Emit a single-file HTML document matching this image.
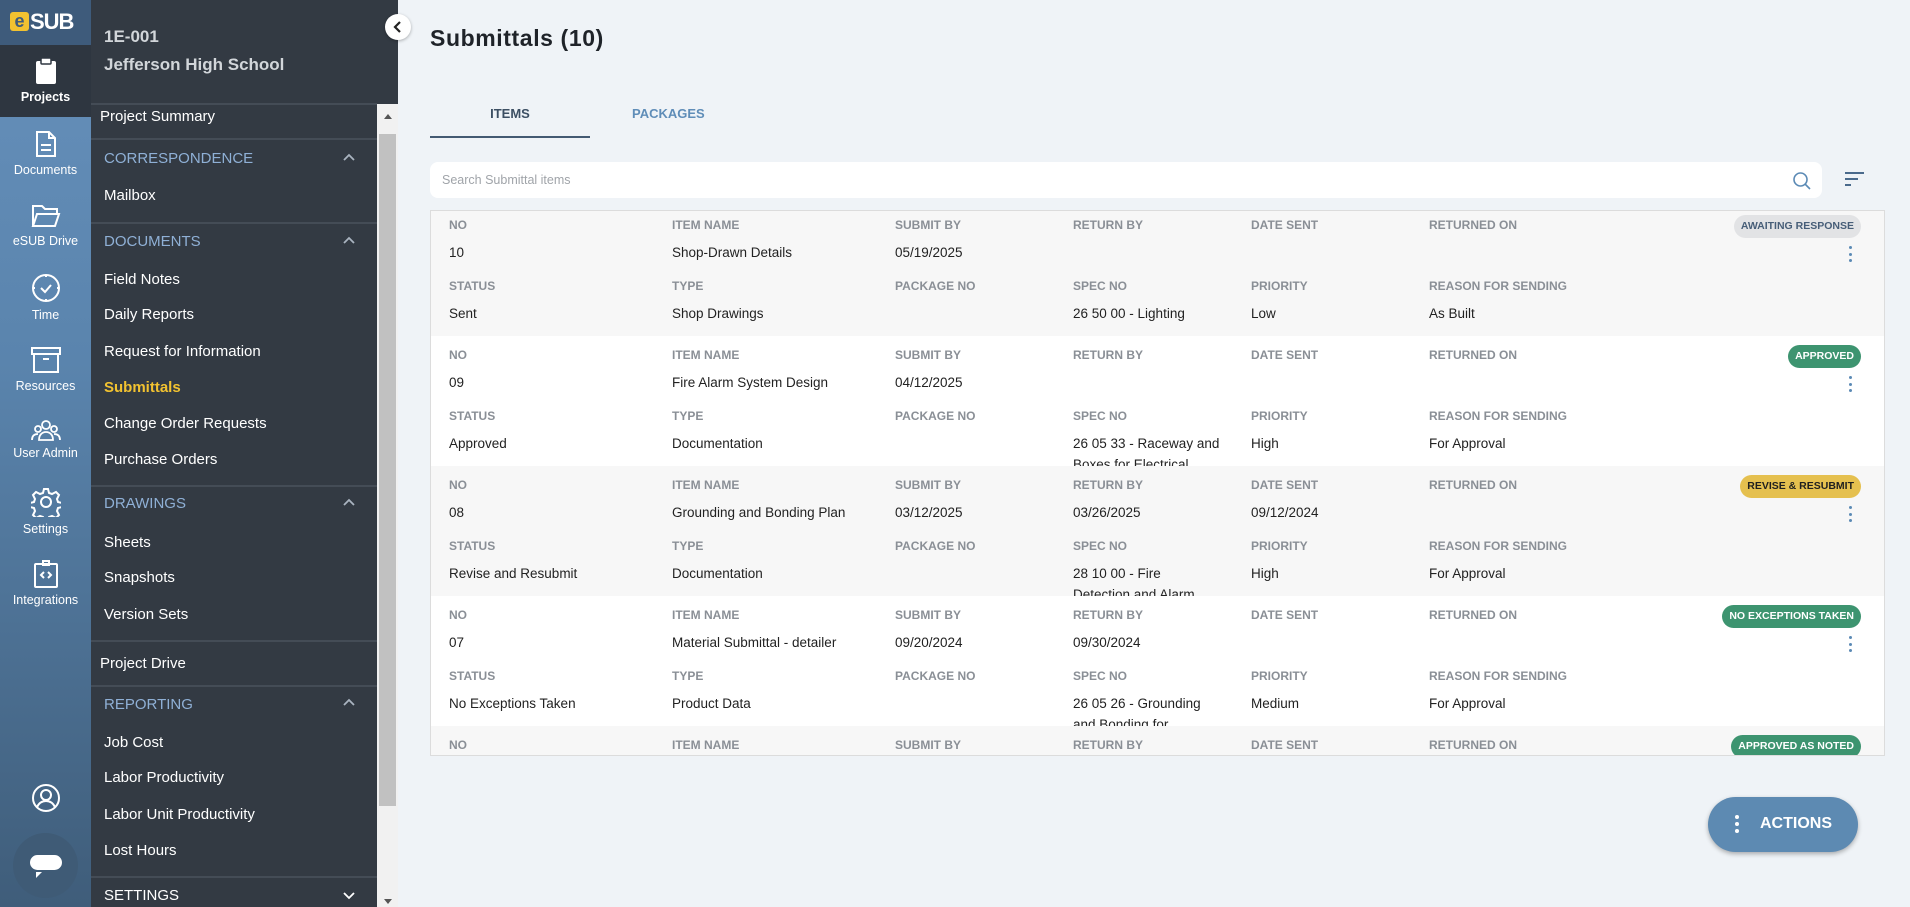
<!DOCTYPE html>
<html><head><meta charset="utf-8"><style>
*{box-sizing:border-box;margin:0;padding:0}
body{width:1910px;height:907px;overflow:hidden;background:#eff3f7;font-family:"Liberation Sans",sans-serif;position:relative}
.rail{position:absolute;left:0;top:0;width:91px;height:907px;background:linear-gradient(#6690bb 0%,#5a84ad 40%,#3f5d7a 100%)}
.logo{position:absolute;left:0;top:0;width:91px;height:45px;background:#3e5b7b}
.proj{position:absolute;left:0;top:45px;width:91px;height:72px;background:#2e3640}
.ri{position:absolute;left:0;width:91px;text-align:center;color:#fff;font-size:12.5px}
.ri svg{display:block;margin:0 auto 5px}
.nav{position:absolute;left:91px;top:0;width:307px;height:907px;background:#333a43;color:#fff}
.nav .t{position:absolute;font-size:15px;white-space:nowrap}
.nav .s{color:#8fb0d6}
.nav .d{position:absolute;left:0;width:286px;height:2px;background:#444c56}
.chev{position:absolute;left:252px;width:12px;height:12px}
.sb{position:absolute;left:377px;top:104px;width:21px;height:803px;background:#f1f1f1}
.main{position:absolute;left:398px;top:0;right:0;bottom:0}
.lbl{position:absolute;font-size:12px;font-weight:bold;color:#8a8f96;white-space:nowrap}
.val{position:absolute;font-size:13.5px;color:#222;line-height:21px}
.row{position:absolute;left:0;width:1453px;height:130px;overflow:hidden}
.badge{position:absolute;right:23px;top:9px;height:23px;border-radius:12px;font-size:10.5px;font-weight:bold;line-height:23px;padding:0 7px;color:#fff}
.dots{position:absolute;left:1418px;top:40px;width:4px}
.dots i{display:block;width:3px;height:3px;border-radius:50%;background:#5b8ab5;margin-bottom:3.5px}
</style></head><body>
<div class="rail">
 <div class="logo"><div style="position:absolute;left:10px;top:12px;width:19px;height:19px;background:#f2c230;border-radius:3px;color:#3e5b7b;font-weight:bold;font-size:18px;line-height:18px;text-align:center">e</div><div style="position:absolute;left:30px;top:9px;color:#fff;font-weight:bold;font-size:22px;letter-spacing:-1px">SUB</div></div>
 <div class="proj"></div>
 <div class="ri" style="top:57px;font-weight:bold"><svg width="22" height="28" viewBox="0 0 22 28"><rect x="1" y="4" width="20" height="23" rx="2" fill="#fff"/><rect x="6" y="1" width="10" height="6" rx="1" fill="#fff" stroke="#2e3640" stroke-width="1.5"/></svg>Projects</div>
 <div class="ri" style="top:130px"><svg width="22" height="28" viewBox="0 0 22 28" fill="none" stroke="#fff" stroke-width="2"><path d="M2 2h12l6 6v18H2z"/><path d="M14 2v6h6M6 15h10M6 20h10"/></svg>Documents</div>
 <div class="ri" style="top:203px"><svg width="30" height="26" viewBox="0 0 30 26" fill="none" stroke="#fff" stroke-width="2"><path d="M2 23V3h9l3 3h12v5M2 23l4-12h22l-4 12z"/></svg>eSUB Drive</div>
 <div class="ri" style="top:273px"><svg width="30" height="30" viewBox="0 0 30 30" fill="none" stroke="#fff" stroke-width="2"><circle cx="15" cy="15" r="13"/><path d="M10 15l4 4 6-7M15 2v2M15 26v2M2 15h2M26 15h2"/></svg>Time</div>
 <div class="ri" style="top:346px"><svg width="30" height="28" viewBox="0 0 30 28" fill="none" stroke="#fff" stroke-width="2"><rect x="1" y="2" width="28" height="6"/><path d="M3 8v18h24V8M12 13h6"/></svg>Resources</div>
 <div class="ri" style="top:419px"><svg width="30" height="22" viewBox="0 0 30 22" fill="none" stroke="#fff" stroke-width="1.8"><circle cx="15" cy="6" r="4"/><circle cx="7" cy="10" r="3"/><circle cx="23" cy="10" r="3"/><path d="M8 21c0-5 3-8 7-8s7 3 7 8zM1 21c0-4 2-6 6-6M29 21c0-4-2-6-6-6"/></svg>User Admin</div>
 <div class="ri" style="top:487px"><svg width="30" height="30" viewBox="0 0 30 30" fill="none" stroke="#fff" stroke-width="2"><circle cx="15" cy="15" r="5"/><path d="M13 2h4l1 4 3 1 4-2 3 3-2 4 1 3 4 1v4l-4 1-1 3 2 4-3 3-4-2-3 1-1 4h-4l-1-4-3-1-4 2-3-3 2-4-1-3-4-1v-4l4-1 1-3-2-4 3-3 4 2 3-1z"/></svg>Settings</div>
 <div class="ri" style="top:560px"><svg width="24" height="28" viewBox="0 0 24 28" fill="none" stroke="#fff" stroke-width="2"><rect x="1" y="4" width="22" height="23" rx="1"/><path d="M9 1h6v4H9zM10 12l-3 3 3 3M14 12l3 3-3 3"/></svg>Integrations</div>
 <div class="ri" style="top:783px"><svg width="30" height="30" viewBox="0 0 30 30" fill="none" stroke="#fff" stroke-width="2"><circle cx="15" cy="15" r="13"/><circle cx="15" cy="12" r="5"/><path d="M6 24c2-4 5-6 9-6s7 2 9 6"/></svg></div>
 <div style="position:absolute;left:13px;top:833px;width:65px;height:65px;border-radius:50%;background:#3f5b76"></div>
 <div style="position:absolute;left:30px;top:855px;width:32px;height:15px;border-radius:8px;background:#fff"></div>
 <div style="position:absolute;left:36px;top:872px;width:0;height:0;border-top:6px solid #fff;border-right:6px solid transparent"></div>
</div>
<div class="nav">
 <div class="t" style="left:13px;top:27px;font-size:17px;font-weight:bold;color:#d2d6da">1E-001</div>
 <div class="t" style="left:13px;top:55px;font-size:17px;font-weight:bold;color:#d2d6da">Jefferson High School</div>
 <div class="d" style="top:103px"></div>
 <div class="t" style="left:9px;top:108px">Project Summary</div>
 <div class="d" style="top:138px"></div>
 <div class="t s" style="left:13px;top:150px">CORRESPONDENCE</div>
 <div class="t" style="left:13px;top:187px">Mailbox</div>
 <div class="d" style="top:222px"></div>
 <div class="t s" style="left:13px;top:233px">DOCUMENTS</div>
 <div class="t" style="left:13px;top:271px">Field Notes</div>
 <div class="t" style="left:13px;top:306px">Daily Reports</div>
 <div class="t" style="left:13px;top:343px">Request for Information</div>
 <div class="t" style="left:13px;top:379px;color:#f2c230;font-weight:bold">Submittals</div>
 <div class="t" style="left:13px;top:415px">Change Order Requests</div>
 <div class="t" style="left:13px;top:451px">Purchase Orders</div>
 <div class="d" style="top:485px"></div>
 <div class="t s" style="left:13px;top:495px">DRAWINGS</div>
 <div class="t" style="left:13px;top:534px">Sheets</div>
 <div class="t" style="left:13px;top:569px">Snapshots</div>
 <div class="t" style="left:13px;top:606px">Version Sets</div>
 <div class="d" style="top:640px"></div>
 <div class="t" style="left:9px;top:655px">Project Drive</div>
 <div class="d" style="top:685px"></div>
 <div class="t s" style="left:13px;top:696px">REPORTING</div>
 <div class="t" style="left:13px;top:734px">Job Cost</div>
 <div class="t" style="left:13px;top:769px">Labor Productivity</div>
 <div class="t" style="left:13px;top:806px">Labor Unit Productivity</div>
 <div class="t" style="left:13px;top:842px">Lost Hours</div>
 <div class="d" style="top:876px"></div>
 <div class="t" style="left:13px;top:887px">SETTINGS</div>
 <svg class="chev" style="top:152px" viewBox="0 0 12 12"><path d="M1 8l5-5 5 5" fill="none" stroke="#aab4c0" stroke-width="1.8"/></svg>
 <svg class="chev" style="top:235px" viewBox="0 0 12 12"><path d="M1 8l5-5 5 5" fill="none" stroke="#aab4c0" stroke-width="1.8"/></svg>
 <svg class="chev" style="top:497px" viewBox="0 0 12 12"><path d="M1 8l5-5 5 5" fill="none" stroke="#aab4c0" stroke-width="1.8"/></svg>
 <svg class="chev" style="top:697px" viewBox="0 0 12 12"><path d="M1 8l5-5 5 5" fill="none" stroke="#aab4c0" stroke-width="1.8"/></svg>
 <svg class="chev" style="top:889px" viewBox="0 0 12 12"><path d="M1 4l5 5 5-5" fill="none" stroke="#fff" stroke-width="1.8"/></svg>
</div>
<div class="sb"><div style="position:absolute;left:7px;top:10px;border:4px solid transparent;border-bottom:5px solid #555;border-top:0"></div><div style="position:absolute;left:2px;top:30px;width:17px;height:672px;background:#c1c1c1"></div><div style="position:absolute;left:7px;top:795px;border:4px solid transparent;border-top:5px solid #555;border-bottom:0"></div></div>
<div style="position:absolute;left:385px;top:14px;width:26px;height:26px;border-radius:50%;background:#fff;box-shadow:0 1px 3px rgba(0,0,0,.3)"><svg width="26" height="26" viewBox="0 0 26 26"><path d="M15 8l-5 5 5 5" fill="none" stroke="#222" stroke-width="2.2"/></svg></div>
<div class="main">
 <div style="position:absolute;left:32px;top:25px;font-size:23px;font-weight:bold;color:#1f2329;letter-spacing:0.6px">Submittals (10)</div>
 <div style="position:absolute;left:32px;top:106px;width:160px;text-align:center;font-size:13px;font-weight:bold;color:#3c4f63">ITEMS</div>
 <div style="position:absolute;left:32px;top:136px;width:160px;height:2px;background:#445a72"></div>
 <div style="position:absolute;left:234px;top:106px;font-size:13px;font-weight:bold;color:#5f8db8">PACKAGES</div>
 <div style="position:absolute;left:32px;top:162px;width:1392px;height:36px;background:#fff;border-radius:8px">
  <div style="position:absolute;left:12px;top:11px;font-size:12.5px;color:#a0a4a9">Search Submittal items</div>
  <svg style="position:absolute;left:1362px;top:9px" width="20" height="20" viewBox="0 0 20 20" fill="none" stroke="#5b8ab5" stroke-width="1.6"><circle cx="8.5" cy="8.5" r="6.5"/><path d="M13 13l5 5"/></svg>
 </div>
 <svg style="position:absolute;left:1447px;top:172px" width="20" height="14" viewBox="0 0 20 14" stroke="#4a6a8c" stroke-width="2"><path d="M0 1h19M0 7h13M0 13h6"/></svg>
 <div style="position:absolute;left:32px;top:210px;width:1455px;height:546px;border:1px solid #dcdcdc;overflow:hidden;background:#fff">
  <div style="position:absolute;left:0;top:-5px;width:1453px">
   <div class="row" style="top:0;background:#f7f7f7">
    <div class="lbl" style="left:18px;top:12px">NO</div><div class="lbl" style="left:241px;top:12px">ITEM NAME</div><div class="lbl" style="left:464px;top:12px">SUBMIT BY</div><div class="lbl" style="left:642px;top:12px">RETURN BY</div><div class="lbl" style="left:820px;top:12px">DATE SENT</div><div class="lbl" style="left:998px;top:12px">RETURNED ON</div>
    <div class="val" style="left:18px;top:36px">10</div><div class="val" style="left:241px;top:36px">Shop-Drawn Details</div><div class="val" style="left:464px;top:36px">05/19/2025</div>
    <div class="lbl" style="left:18px;top:73px">STATUS</div><div class="lbl" style="left:241px;top:73px">TYPE</div><div class="lbl" style="left:464px;top:73px">PACKAGE NO</div><div class="lbl" style="left:642px;top:73px">SPEC NO</div><div class="lbl" style="left:820px;top:73px">PRIORITY</div><div class="lbl" style="left:998px;top:73px">REASON FOR SENDING</div>
    <div class="val" style="left:18px;top:97px">Sent</div><div class="val" style="left:241px;top:97px">Shop Drawings</div><div class="val" style="left:642px;top:97px;width:160px">26 50 00 - Lighting</div><div class="val" style="left:820px;top:97px">Low</div><div class="val" style="left:998px;top:97px">As Built</div>
    <div class="badge" style="background:#e2e3e5;color:#475e78">AWAITING RESPONSE</div>
    <div class="dots"><i></i><i></i><i></i></div>
   </div>
   <div class="row" style="top:130px;background:#fff">
    <div class="lbl" style="left:18px;top:12px">NO</div><div class="lbl" style="left:241px;top:12px">ITEM NAME</div><div class="lbl" style="left:464px;top:12px">SUBMIT BY</div><div class="lbl" style="left:642px;top:12px">RETURN BY</div><div class="lbl" style="left:820px;top:12px">DATE SENT</div><div class="lbl" style="left:998px;top:12px">RETURNED ON</div>
    <div class="val" style="left:18px;top:36px">09</div><div class="val" style="left:241px;top:36px">Fire Alarm System Design</div><div class="val" style="left:464px;top:36px">04/12/2025</div>
    <div class="lbl" style="left:18px;top:73px">STATUS</div><div class="lbl" style="left:241px;top:73px">TYPE</div><div class="lbl" style="left:464px;top:73px">PACKAGE NO</div><div class="lbl" style="left:642px;top:73px">SPEC NO</div><div class="lbl" style="left:820px;top:73px">PRIORITY</div><div class="lbl" style="left:998px;top:73px">REASON FOR SENDING</div>
    <div class="val" style="left:18px;top:97px">Approved</div><div class="val" style="left:241px;top:97px">Documentation</div><div class="val" style="left:642px;top:97px;width:160px">26 05 33 - Raceway and Boxes for Electrical</div><div class="val" style="left:820px;top:97px">High</div><div class="val" style="left:998px;top:97px">For Approval</div>
    <div class="badge" style="background:#3d9470">APPROVED</div>
    <div class="dots"><i></i><i></i><i></i></div>
   </div>
   <div class="row" style="top:260px;background:#f7f7f7">
    <div class="lbl" style="left:18px;top:12px">NO</div><div class="lbl" style="left:241px;top:12px">ITEM NAME</div><div class="lbl" style="left:464px;top:12px">SUBMIT BY</div><div class="lbl" style="left:642px;top:12px">RETURN BY</div><div class="lbl" style="left:820px;top:12px">DATE SENT</div><div class="lbl" style="left:998px;top:12px">RETURNED ON</div>
    <div class="val" style="left:18px;top:36px">08</div><div class="val" style="left:241px;top:36px">Grounding and Bonding Plan</div><div class="val" style="left:464px;top:36px">03/12/2025</div><div class="val" style="left:642px;top:36px">03/26/2025</div><div class="val" style="left:820px;top:36px">09/12/2024</div>
    <div class="lbl" style="left:18px;top:73px">STATUS</div><div class="lbl" style="left:241px;top:73px">TYPE</div><div class="lbl" style="left:464px;top:73px">PACKAGE NO</div><div class="lbl" style="left:642px;top:73px">SPEC NO</div><div class="lbl" style="left:820px;top:73px">PRIORITY</div><div class="lbl" style="left:998px;top:73px">REASON FOR SENDING</div>
    <div class="val" style="left:18px;top:97px">Revise and Resubmit</div><div class="val" style="left:241px;top:97px">Documentation</div><div class="val" style="left:642px;top:97px;width:125px">28 10 00 - Fire Detection and Alarm</div><div class="val" style="left:820px;top:97px">High</div><div class="val" style="left:998px;top:97px">For Approval</div>
    <div class="badge" style="background:#e5c04f;color:#1f1f1f">REVISE &amp; RESUBMIT</div>
    <div class="dots"><i></i><i></i><i></i></div>
   </div>
   <div class="row" style="top:390px;background:#fff">
    <div class="lbl" style="left:18px;top:12px">NO</div><div class="lbl" style="left:241px;top:12px">ITEM NAME</div><div class="lbl" style="left:464px;top:12px">SUBMIT BY</div><div class="lbl" style="left:642px;top:12px">RETURN BY</div><div class="lbl" style="left:820px;top:12px">DATE SENT</div><div class="lbl" style="left:998px;top:12px">RETURNED ON</div>
    <div class="val" style="left:18px;top:36px">07</div><div class="val" style="left:241px;top:36px">Material Submittal - detailer</div><div class="val" style="left:464px;top:36px">09/20/2024</div><div class="val" style="left:642px;top:36px">09/30/2024</div>
    <div class="lbl" style="left:18px;top:73px">STATUS</div><div class="lbl" style="left:241px;top:73px">TYPE</div><div class="lbl" style="left:464px;top:73px">PACKAGE NO</div><div class="lbl" style="left:642px;top:73px">SPEC NO</div><div class="lbl" style="left:820px;top:73px">PRIORITY</div><div class="lbl" style="left:998px;top:73px">REASON FOR SENDING</div>
    <div class="val" style="left:18px;top:97px">No Exceptions Taken</div><div class="val" style="left:241px;top:97px">Product Data</div><div class="val" style="left:642px;top:97px;width:150px">26 05 26 - Grounding and Bonding for Electrical</div><div class="val" style="left:820px;top:97px">Medium</div><div class="val" style="left:998px;top:97px">For Approval</div>
    <div class="badge" style="background:#3d9470">NO EXCEPTIONS TAKEN</div>
    <div class="dots"><i></i><i></i><i></i></div>
   </div>
   <div class="row" style="top:520px;background:#f7f7f7">
    <div class="lbl" style="left:18px;top:12px">NO</div><div class="lbl" style="left:241px;top:12px">ITEM NAME</div><div class="lbl" style="left:464px;top:12px">SUBMIT BY</div><div class="lbl" style="left:642px;top:12px">RETURN BY</div><div class="lbl" style="left:820px;top:12px">DATE SENT</div><div class="lbl" style="left:998px;top:12px">RETURNED ON</div>
    <div class="badge" style="background:#3d9470">APPROVED AS NOTED</div>
   </div>
  </div>
 </div>
 <div style="position:absolute;left:1310px;top:797px;width:150px;height:55px;border-radius:28px;background:#5d8ab2;box-shadow:0 2px 5px rgba(0,0,0,.3);color:#fff;font-weight:bold;font-size:16px">
  <div style="position:absolute;left:27px;top:18px;width:4px"><i style="display:block;width:4px;height:4px;border-radius:50%;background:#fff;margin-bottom:3px"></i><i style="display:block;width:4px;height:4px;border-radius:50%;background:#fff;margin-bottom:3px"></i><i style="display:block;width:4px;height:4px;border-radius:50%;background:#fff"></i></div>
  <div style="position:absolute;left:52px;top:18px">ACTIONS</div>
 </div>
</div>
</body></html>
